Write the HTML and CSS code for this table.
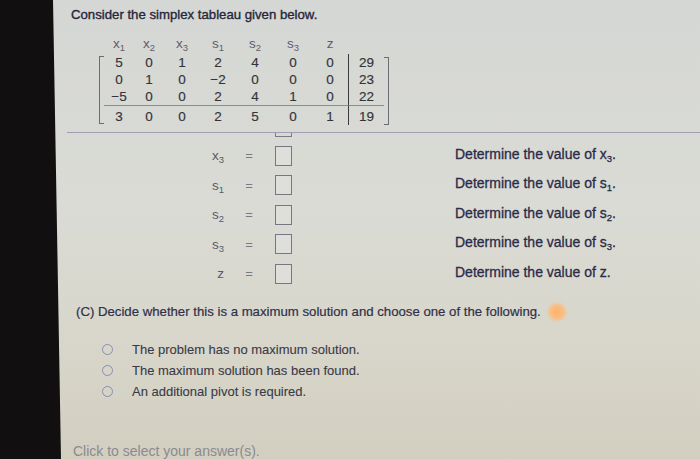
FILE: index.html
```html
<!DOCTYPE html>
<html>
<head>
<meta charset="utf-8">
<link rel="stylesheet" href="styles.css">
</head>
<body>
<div class="screen">
  <div class="bezel"></div>
  <main class="content">
    <p class="title">Consider the simplex tableau given below.</p>
    <div class="tableau">
      <span class="hd c2">x<sub>1</sub></span>
      <span class="hd c3">x<sub>2</sub></span>
      <span class="hd c4">x<sub>3</sub></span>
      <span class="hd c5">s<sub>1</sub></span>
      <span class="hd c6">s<sub>2</sub></span>
      <span class="hd c7">s<sub>3</sub></span>
      <span class="hd c8">z</span>

      <span class="bl"></span>
      <span class="br"></span>

      <span class="n">5</span><span class="n">0</span><span class="n">1</span><span class="n">2</span><span class="n">4</span><span class="n">0</span><span class="n">0</span><span class="n rhs">29</span>
      <span class="n">0</span><span class="n">1</span><span class="n">0</span><span class="n">&minus;2</span><span class="n">0</span><span class="n">0</span><span class="n">0</span><span class="n rhs">23</span>
      <span class="n">&minus;5</span><span class="n">0</span><span class="n">0</span><span class="n">2</span><span class="n">4</span><span class="n">1</span><span class="n">0</span><span class="n rhs">22</span>
      <span class="n last">3</span><span class="n last">0</span><span class="n last">0</span><span class="n last">2</span><span class="n last">5</span><span class="n last">0</span><span class="n last">1</span><span class="n rhs last">19</span>
    </div>

    <section class="answers">
      <div class="stub"></div>
      <div class="rows">
        <span class="lbl">x<sub>3</sub></span><span class="eq">=</span><span class="cell"><span class="box"></span></span><span class="desc">Determine the value of x<sub>3</sub>.</span>
        <span class="lbl">s<sub>1</sub></span><span class="eq">=</span><span class="cell"><span class="box"></span></span><span class="desc">Determine the value of s<sub>1</sub>.</span>
        <span class="lbl">s<sub>2</sub></span><span class="eq">=</span><span class="cell"><span class="box"></span></span><span class="desc">Determine the value of s<sub>2</sub>.</span>
        <span class="lbl">s<sub>3</sub></span><span class="eq">=</span><span class="cell"><span class="box"></span></span><span class="desc">Determine the value of s<sub>3</sub>.</span>
        <span class="lbl">z</span><span class="eq">=</span><span class="cell"><span class="box"></span></span><span class="desc">Determine the value of z.</span>
      </div>

      <p class="question">(C) Decide whether this is a maximum solution and choose one of the following.<span class="glare"></span></p>

      <ul class="options">
        <li><span class="radio"></span>The problem has no maximum solution.</li>
        <li><span class="radio"></span>The maximum solution has been found.</li>
        <li><span class="radio"></span>An additional pivot is required.</li>
      </ul>

      <p class="footer">Click to select your answer(s).</p>
    </section>
  </main>
</div>
</body>
</html>
```

FILE: styles.css
```css
* { box-sizing: border-box; }
html, body { margin: 0; padding: 0; }
body {
  width: 700px;
  height: 459px;
  overflow: hidden;
  font-family: "Liberation Sans", Arial, sans-serif;
  background: linear-gradient(180deg, #d5d7d4 0%, #dadbd5 45%, #d8d6ca 75%, #d2cfc1 100%);
}
.screen {
  display: flex;
  height: 459px;
}
.bezel {
  flex: 0 0 62px;
  height: 459px;
  background: #110f0f;
  clip-path: polygon(0 0, 53px 0, 61px 100%, 0 100%);
}
.content {
  flex: 1;
  padding: 7px 0 0 5px;
}
.title {
  margin: 0 0 0 4px;
  font-size: 13.2px;
  line-height: 16px;
  color: #26263a;
  -webkit-text-stroke: 0.35px #26263a;
}
sub {
  font-size: 9.5px;
  line-height: 0;
  vertical-align: -3px;
}

/* tableau */
.tableau {
  display: grid;
  grid-template-columns: 5px 30px 30px 36px 36px 38px 38px 36px 36px 5px;
  grid-template-rows: 20px 17px 17px 17px 20px;
  margin: 11px 0 0 32px;
  width: 290px;
  font-size: 13.5px;
  color: #333338;
}
.hd {
  grid-row: 1;
  text-align: center;
  line-height: 20px;
  font-size: 13.5px;
  color: #5e5e6a;
}
.c2 { grid-column: 2; }
.c3 { grid-column: 3; }
.c4 { grid-column: 4; }
.c5 { grid-column: 5; }
.c6 { grid-column: 6; }
.c7 { grid-column: 7; }
.c8 { grid-column: 8; }
.n {
  text-align: center;
  line-height: 17px;
  -webkit-text-stroke: 0.15px #333338;
}
.n:nth-of-type(8n+2) { grid-column: 2; }
.rhs {
  border-left: 1px solid #3a3a40;
}
.last {
  border-top: 1px solid #8c8c94;
  padding-top: 2px;
}
.bl {
  grid-column: 1;
  grid-row: 2 / 6;
  margin: 2px 0 1px 0;
  border: 1px solid #6c6c74;
  border-right: none;
  border-left-width: 1.5px;
}
.br {
  grid-column: 10;
  grid-row: 2 / 6;
  margin: 3px 0 0 0;
  border: 1px solid #6c6c74;
  border-left: none;
  border-right-width: 1.5px;
}

/* answers */
.answers {
  margin-top: 7px;
  border-top: 1px solid #9ea0b2;
}
.stub {
  width: 17px;
  height: 4px;
  margin-left: 208px;
  border: 1px solid #7b7b86;
  border-top: none;
}
.rows {
  display: grid;
  grid-template-columns: 157px 50px 181px 1fr;
  grid-auto-rows: 29.5px;
  margin-top: 4px;
  align-items: center;
}
.lbl {
  text-align: right;
  font-size: 13.5px;
  color: #5a5a66;
}
.eq {
  text-align: center;
  font-size: 13px;
  color: #7a7a84;
}
.cell { display: flex; }
.box {
  width: 17px;
  height: 20px;
  margin-left: 1px;
  border: 1px solid #777783;
  background: #dedfdb;
}
.desc {
  font-size: 14px;
  color: #2b2b48;
  -webkit-text-stroke: 0.3px #2b2b48;
  margin-top: -4px;
}
.question {
  margin: 14px 0 0 9px;
  font-size: 13.2px;
  line-height: 17px;
  color: #30304a;
  -webkit-text-stroke: 0.2px #30304a;
  display: flex;
  align-items: center;
}
.glare {
  display: inline-block;
  width: 18px;
  height: 18px;
  margin-left: 7px;
  border-radius: 50%;
  background: radial-gradient(circle, #ffb068 0%, #f9bf86 55%, rgba(245,200,150,0.5) 100%);
  filter: blur(1px);
}
.options {
  list-style: none;
  margin: 18px 0 0 0;
  padding: 0;
}
.options li {
  display: flex;
  align-items: center;
  height: 21px;
  font-size: 13px;
  color: #3a3a46;
  -webkit-text-stroke: 0.1px #3a3a46;
}
.radio {
  width: 11px;
  height: 11px;
  margin: 0 19px 0 35px;
  border: 1.5px solid #8590b3;
  border-radius: 50%;
}
.footer {
  margin: 41px 0 0 6px;
  font-size: 14px;
  line-height: 17px;
  color: #8a8a8e;
}
```
